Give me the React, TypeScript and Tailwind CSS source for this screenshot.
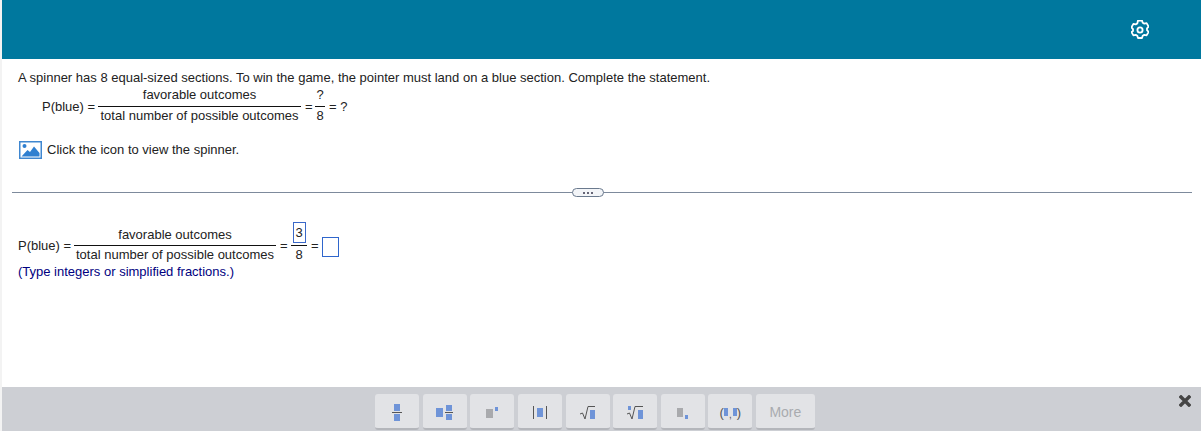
import React from "react";

function Frac({ top, bottom, lineClass, topClass = "pb-[3px]" }: { top: React.ReactNode; bottom: React.ReactNode; lineClass: string; topClass?: string }) {
  return (
    <span className="inline-flex flex-col items-center shrink-0">
      <span className={`h-[23px] flex items-end justify-center leading-[16px] ${topClass}`}>{top}</span>
      <span className={`h-[1px] bg-[#111] ${lineClass}`} />
      <span className="h-[23px] leading-[17px] flex justify-center">{bottom}</span>
    </span>
  );
}

function Slot({ c = "bg-[#6f94d8]", w = 5, h = 7 }: { c?: string; w?: number; h?: number }) {
  return <span className={c} style={{ width: w, height: h, display: "block" }} />;
}

function Btn({ children, w = "w-[44px]" }: { children: React.ReactNode; w?: string }) {
  return (
    <div className={`${w} h-[36px] pt-[2px] rounded-[3px] bg-[#e2e3e6] border-b-2 border-b-[#b4b6bb] flex items-center justify-center`}>
      {children}
    </div>
  );
}

export default function App() {
  return (
    <div className="w-[1201px] h-[431px] flex bg-white overflow-hidden text-[13px] text-[#222] font-['Liberation_Sans',Arial,sans-serif]">
      <div className="w-[2px] bg-[#f3f3f3]" />
      <div className="flex-1 flex flex-col min-w-0">
        <header className="h-[59px] bg-[#00789e] flex items-center justify-end pr-[52px] shrink-0">
          <svg width="18" height="20" viewBox="0 0 18 20" fill="none" stroke="#fff" strokeWidth="1.8" strokeLinejoin="round">
            <path d="M7 2.2h4l.7 2.2 1.6.9 2.3-.5 2 3.4-1.6 1.8v1.9l1.6 1.8-2 3.4-2.3-.5-1.6.9-.7 2.2H7l-.7-2.2-1.6-.9-2.3.5-2-3.4L2 12.7v-1.9L.4 9l2-3.4 2.3.5 1.6-.9z" transform="translate(0 -1.7)" />
            <circle cx="9" cy="10" r="2.6" />
          </svg>
        </header>

        <main className="flex-1 min-h-0 flex flex-col">
          <div className="pl-[16px] pt-[10px]">
            <p className="leading-[17px] h-[17px] whitespace-nowrap">A spinner has 8 equal-sized sections. To win the game, the pointer must land on a blue section. Complete the statement.</p>
            <div className="flex items-center pl-[24px] h-[41px] whitespace-nowrap">
              <span className="w-[56px] shrink-0">P(blue) =</span>
              <Frac top="favorable outcomes" bottom="total number of possible outcomes" lineClass="w-[203px]" />
              <span className="w-[14px] pl-[4px] shrink-0">=</span>
              <Frac top="?" bottom="8" lineClass="w-[10px]" />
              <span className="ml-[4px]">= ?</span>
            </div>
            <div className="flex items-center mt-[13px] h-[20px]">
              <svg width="23" height="18" viewBox="0 0 23 18" className="mr-[5px] ml-[1px] shrink-0">
                <rect x="0.75" y="0.75" width="21.5" height="16.5" fill="#fff" stroke="#3f87d0" strokeWidth="1.5" />
                <circle cx="5.5" cy="5" r="2" fill="#2f7fd0" />
                <path d="M2.5 15.5 L8.5 9 L11 11 L15 5.5 L20.5 12 V15.5 Z" fill="#2f7fd0" />
              </svg>
              <span className="whitespace-nowrap">Click the icon to view the spinner.</span>
            </div>
          </div>

          <div className="relative mt-[32px] ml-[10px] mr-[9px] h-[1px] bg-[#7d8a9c]">
            <div className="absolute left-[560px] top-[-4px] w-[32px] h-[9px] rounded-full border border-[#6b7a8e] bg-[#f3f5f8] flex items-center justify-center gap-[2px]">
              <span className="w-[2px] h-[2px] bg-[#667]" />
              <span className="w-[2px] h-[2px] bg-[#667]" />
              <span className="w-[2px] h-[2px] bg-[#667]" />
            </div>
          </div>

          <div className="pl-[16px] pt-[34px]">
            <div className="flex items-center h-[37px] whitespace-nowrap">
              <span className="w-[56px] shrink-0">P(blue) =</span>
              <Frac topClass="pb-[2px]" top="favorable outcomes" bottom="total number of possible outcomes" lineClass="w-[202px]" />
              <span className="w-[15px] pl-[4px] shrink-0">=</span>
              <Frac
                topClass="pb-[2px]"
                top={<span className="w-[13px] h-[21px] border border-[#3a68c8] flex items-center justify-center leading-[17px]">3</span>}
                bottom="8"
                lineClass="w-[16px]"
              />
              <span className="w-[15px] pl-[4px] shrink-0">=</span>
              <span className="w-[17px] h-[20px] mt-[3px] border border-[#2f66cc] bg-white shrink-0" />
            </div>
            <p className="leading-[15px] text-[#000080] whitespace-nowrap">(Type integers or simplified fractions.)</p>
          </div>
        </main>

        <footer className="relative h-[44px] shrink-0 bg-[#cdcfd4] flex justify-center items-start pt-[7px] pr-[13px] gap-[3.6px]">
          <Btn>
            <span className="flex flex-col items-center gap-[1px]"><Slot w={6} h={7} /><span className="w-[10px] h-[1px] bg-[#555]" /><Slot w={6} h={7} /></span>
          </Btn>
          <Btn>
            <span className="flex items-center gap-[2px]"><Slot w={7} h={9} /><span className="flex flex-col items-center gap-[1px]"><Slot w={6} h={6} /><span className="w-[8px] h-[1px] bg-[#555]" /><Slot w={6} h={6} /></span></span>
          </Btn>
          <Btn>
            <span className="flex items-start gap-[2px]"><span className="mt-[2px]"><Slot c="bg-[#a9aaad]" w={7} h={9} /></span><Slot w={3} h={4} /></span>
          </Btn>
          <Btn>
            <span className="flex items-center gap-[3px]"><span className="w-[1px] h-[13px] bg-[#555]" /><Slot w={6} h={9} /><span className="w-[1px] h-[13px] bg-[#555]" /></span>
          </Btn>
          <Btn>
            <span className="relative flex items-end">
              <svg width="15" height="15" viewBox="0 0 15 15" fill="none" stroke="#555" strokeWidth="1"><path d="M0 9 L2.5 8 L5 14 L8 1.5 H15" /></svg>
              <span className="absolute right-[0px] bottom-[1px]"><Slot w={5} h={9} /></span>
            </span>
          </Btn>
          <Btn>
            <span className="relative flex items-end">
              <svg width="16" height="15" viewBox="0 0 16 15" fill="none" stroke="#555" strokeWidth="1"><path d="M0 9 L2.5 8 L5 14 L8 1.5 H16" /></svg>
              <span className="absolute left-[1px] top-[1px]"><Slot w={3} h={4} /></span>
              <span className="absolute right-[0px] bottom-[1px]"><Slot w={5} h={9} /></span>
            </span>
          </Btn>
          <Btn>
            <span className="flex items-end gap-[2px]"><Slot c="bg-[#a9aaad]" w={6} h={9} /><span className="-mb-[2px]"><Slot w={3} h={4} /></span></span>
          </Btn>
          <Btn>
            <span className="flex items-center text-[#555] text-[13px] leading-none">(<Slot w={4} h={8} /><span className="-mb-[6px] text-[10px] mx-[1px]">,</span><Slot w={4} h={8} />)</span>
          </Btn>
          <Btn w="w-[59px]"><span className="text-[#a9abaf] text-[14px]">More</span></Btn>
          <svg width="12" height="12" viewBox="0 0 12 12" className="absolute right-[10px] top-[8px]" stroke="#444" strokeWidth="3.4" strokeLinecap="square"><path d="M2 2 L10 10 M10 2 L2 10" /></svg>
        </footer>
      </div>
    </div>
  );
}
